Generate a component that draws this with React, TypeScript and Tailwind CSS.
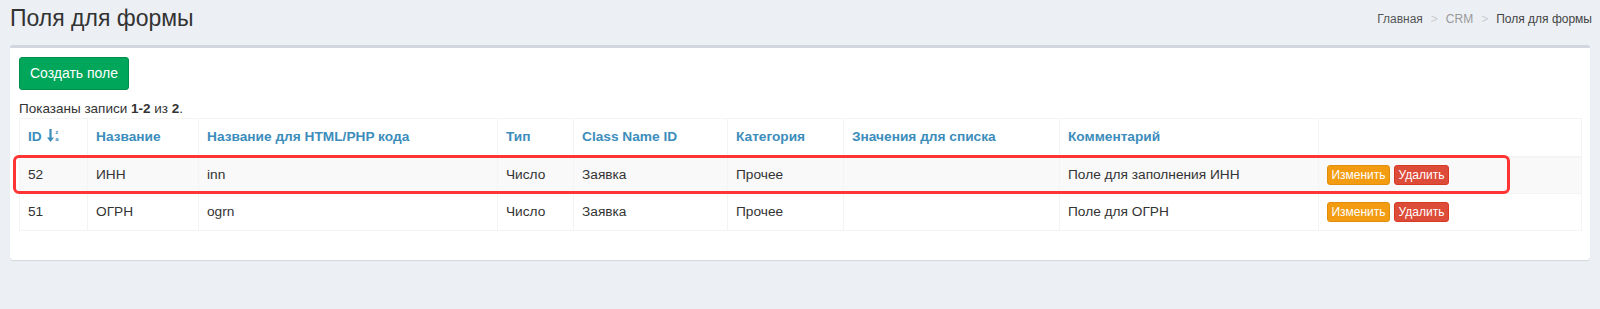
import React from "react";

const cols = [
  { label: "ID", w: "w-[68px]" },
  { label: "Название", w: "w-[111px]" },
  { label: "Название для HTML/PHP кода", w: "w-[299px]" },
  { label: "Тип", w: "w-[76px]" },
  { label: "Class Name ID", w: "w-[154px]" },
  { label: "Категория", w: "w-[116px]" },
  { label: "Значения для списка", w: "w-[216px]" },
  { label: "Комментарий", w: "w-[259px]" },
  { label: "", w: "" },
];

const rows = [
  ["52", "ИНН", "inn", "Число", "Заявка", "Прочее", "", "Поле для заполнения ИНН"],
  ["51", "ОГРН", "ogrn", "Число", "Заявка", "Прочее", "", "Поле для ОГРН"],
];

function SortIcon() {
  return (
    <svg width="13" height="15" viewBox="0 0 13 15" className="inline-block align-[-2px] ml-[5px]">
      <path d="M3.5 1 V11" stroke="#3c8dbc" strokeWidth="2.2" />
      <path d="M0 9.5 L3.5 14 L7 9.5 Z" fill="#3c8dbc" />
      <text x="8.2" y="5.5" fontSize="6" fontFamily="Liberation Sans, Arial, sans-serif" fontWeight="700" fill="#3c8dbc">z</text>
      <text x="8.2" y="12.5" fontSize="6" fontFamily="Liberation Sans, Arial, sans-serif" fontWeight="700" fill="#3c8dbc">a</text>
    </svg>
  );
}

export default function App() {
  return (
    <div className="min-h-[309px] bg-[#ecf0f5] font-['Liberation_Sans',Arial,sans-serif] text-[14px] text-[#333]">
      <div className="flex h-[38px] items-center justify-between pl-[10px] pr-[8px]">
        <h1 className="text-[23px] leading-[1.1] font-normal text-[#333]">Поля для формы</h1>
        <div className="flex items-center text-[12px] text-[#444]">
          <span className="text-[#555]">Главная</span>
          <span className="px-[8px] text-[#ccc]">&gt;</span>
          <span className="text-[#999]">CRM</span>
          <span className="px-[8px] text-[#ccc]">&gt;</span>
          <span className="text-[#444]">Поля для формы</span>
        </div>
      </div>
      <div className="relative mx-[10px] mt-[7px] rounded-[3px] border-t-[3px] border-[#d2d6de] bg-white pl-[9px] pr-[8px] pt-[9px] pb-[29px] shadow-[0_1px_1px_rgba(0,0,0,0.1)]">
        <button className="h-[33px] w-[110px] rounded-[3px] border border-[#008d4c] bg-[#00a65a] text-[14px] text-white">
          Создать поле
        </button>
        <div className="mt-[10px] h-[18px] text-[13.5px] leading-[18px] text-[#333]">
          Показаны записи <b>1-2</b> из <b>2</b>.
        </div>
        <table className="w-full table-fixed border-collapse border border-[#f4f4f4] text-[13.7px]">
          <thead>
            <tr>
              {cols.map((c, i) => (
                <th
                  key={i}
                  className={`${c.w} h-[38px] border border-b-2 border-[#f4f4f4] px-[8px] text-left font-bold text-[#3c8dbc] leading-[20px]`}
                >
                  {c.label}
                  {i === 0 && <SortIcon />}
                </th>
              ))}
            </tr>
          </thead>
          <tbody>
            {rows.map((r, ri) => (
              <tr key={ri} className={ri === 0 ? "bg-[#f9f9f9]" : "bg-white"}>
                {r.map((cell, ci) => (
                  <td key={ci} className="h-[37px] border border-[#f4f4f4] px-[8px] leading-[20px] text-[#333]">
                    {cell}
                  </td>
                ))}
                <td className="h-[37px] border border-[#f4f4f4] px-[8px]">
                  <div className="flex gap-[4px]">
                    <span className="inline-block h-[20px] w-[63px] rounded-[3px] border border-[#e08e0b] bg-[#f39c12] text-center text-[12px] leading-[18px] text-white">
                      Изменить
                    </span>
                    <span className="inline-block h-[20px] w-[55px] rounded-[3px] border border-[#d73925] bg-[#dd4b39] text-center text-[12px] leading-[18px] text-white">
                      Удалить
                    </span>
                  </div>
                </td>
              </tr>
            ))}
          </tbody>
        </table>
        <div className="pointer-events-none absolute left-[3px] top-[107px] h-[39px] w-[1497px] rounded-[6px] border-[3px] border-[#ff3535]" />
      </div>
    </div>
  );
}
